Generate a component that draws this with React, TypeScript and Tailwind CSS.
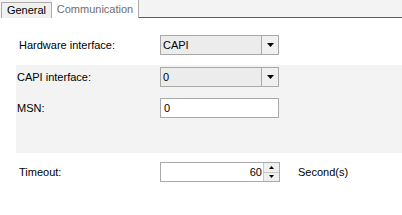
import { ReactNode } from "react";

function ArrowDown() {
  return (
    <svg width="7" height="4" viewBox="0 0 7 4" aria-hidden="true">
      <path d="M0 0H7L3.5 4Z" fill="#000" />
    </svg>
  );
}

function ComboBox({ value }: { value: string }) {
  return (
    <div className="flex h-[20px] w-[119px] border border-[#a9a9a9] bg-[#ececec]">
      <div className="flex flex-1 items-center pl-[2px] text-[11px] leading-none text-black">{value}</div>
      <div className="flex w-[17px] items-center justify-center border-l border-[#a9a9a9] bg-[#f0f0f0]">
        <ArrowDown />
      </div>
    </div>
  );
}

function TextBox({ value }: { value: string }) {
  return (
    <div className="flex h-[20px] w-[119px] items-center border border-[#a9a9a9] bg-white pl-[3px] text-[11px] leading-none text-black">
      {value}
    </div>
  );
}

function SpinBox({ value }: { value: string }) {
  return (
    <div className="flex h-[20px] w-[120px] border border-[#a9a9a9] bg-white">
      <div className="flex flex-1 items-center justify-end pr-[1px] text-[11px] leading-none text-black">{value}</div>
      <div className="flex w-[16px] flex-col border-l border-[#c9c9c9] bg-[#f0f0f0]">
        <div className="flex flex-1 items-center justify-center border-b border-[#c9c9c9]">
          <svg width="5" height="3" viewBox="0 0 5 3" aria-hidden="true">
            <path d="M0 3H5L2.5 0Z" fill="#000" />
          </svg>
        </div>
        <div className="flex flex-1 items-center justify-center">
          <svg width="5" height="3" viewBox="0 0 5 3" aria-hidden="true">
            <path d="M0 0H5L2.5 3Z" fill="#000" />
          </svg>
        </div>
      </div>
    </div>
  );
}

function Row({ label, labelWidth, children }: { label: string; labelWidth: string; children: ReactNode }) {
  return (
    <div className="flex items-center">
      <span className={`${labelWidth} text-[11px] leading-none text-black`}>{label}</span>
      {children}
    </div>
  );
}

export default function App() {
  return (
    <div
      className="h-[215px] w-[402px] overflow-hidden bg-white"
      style={{ fontFamily: '"Liberation Sans", Arial, sans-serif' }}
    >
      {/* tab strip */}
      <div className="flex h-[18px] items-end bg-[#f3f3f3]">
        <div className="ml-[1px] flex h-[16px] w-[51px] items-center justify-center border border-b-0 border-[#acacac] bg-[#f0f0f0] text-[11px] leading-none text-black">
          General
        </div>
        <div className="flex h-[18px] w-[87px] items-center justify-center border-r border-[#acacac] bg-white text-[11px] leading-none text-[#6d6d6d]">
          Communication
        </div>
        <div className="h-full flex-1 border-b border-[#5c5c66]" />
      </div>

      <div className="pt-[17px]">
        <div className="pl-[19px]">
          <Row label="Hardware interface:" labelWidth="w-[141px]">
            <ComboBox value="CAPI" />
          </Row>
        </div>

        <div className="mt-[10px] ml-[16px] flex h-[88px] flex-col gap-[11px] bg-[#f3f3f3] pt-[2px] pl-[1px]">
          <Row label="CAPI interface:" labelWidth="w-[143px]">
            <ComboBox value="0" />
          </Row>
          <Row label="MSN:" labelWidth="w-[143px]">
            <TextBox value="0" />
          </Row>
        </div>

        <div className="mt-[9px] pl-[19px]">
          <Row label="Timeout:" labelWidth="w-[141px]">
            <SpinBox value="60" />
            <span className="ml-[18px] text-[11px] leading-none text-black">Second(s)</span>
          </Row>
        </div>
      </div>
    </div>
  );
}
